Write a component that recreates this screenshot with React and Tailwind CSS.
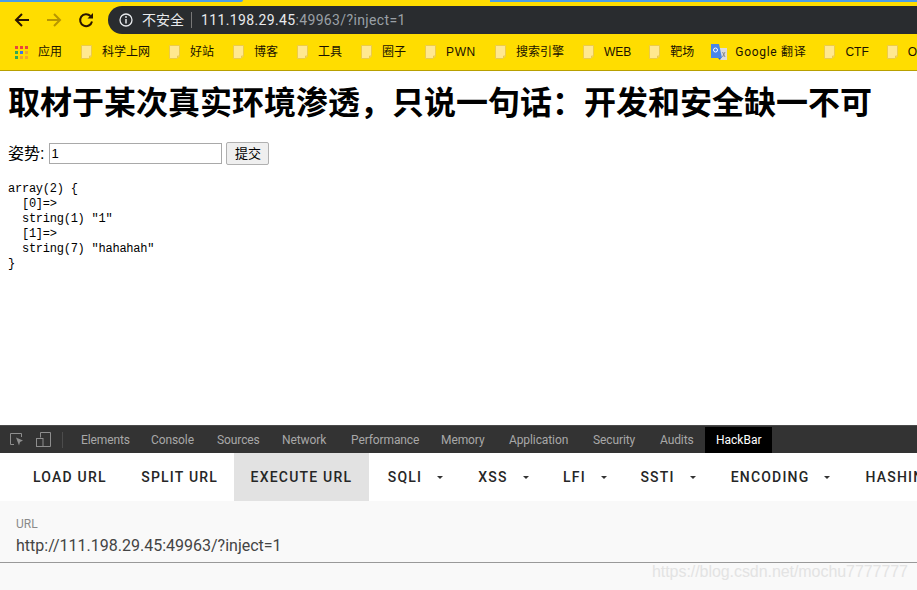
const CJK = 'font-["Liberation_Sans","Noto_Sans_CJK_SC",sans-serif]';

function Folder() {
  return (
    <svg width="11" height="14" viewBox="0 0 11 14" className="shrink-0 block">
      <path d="M0.5 0.5H10.5V11L8 13.5H0.5Z" fill="#ffe890" stroke="#eccb4a" />
      <path d="M8.5 13V11H10.5" fill="none" stroke="#eccb4a" />
    </svg>
  );
}

function Bookmark({ children, cls = 'mr-[19px]', textCls = '' }) {
  return (
    <div className={`flex items-center shrink-0 ${cls}`}>
      <Folder />
      <span className={`ml-[10px] text-[12px] text-[#1a1200] whitespace-nowrap ${textCls}`}>{children}</span>
    </div>
  );
}

function AppsIcon() {
  const c = ['#e8453c', '#e8453c', '#e8453c', '#34a853', '#3c78e8', '#f0a830', '#34a853', '#f0a830', '#f0a830'];
  return (
    <div className="grid grid-cols-3 gap-[2px] w-[13px] shrink-0">
      {c.map((x, i) => (
        <div key={i} className="w-[3px] h-[3px]" style={{ background: x }} />
      ))}
    </div>
  );
}

function TranslateIcon() {
  return (
    <svg width="16" height="16" viewBox="0 0 16 16" className="shrink-0 block">
      <path d="M9 4H16V16H9Z" fill="#dcdcdc" />
      <path d="M0 0H8L11 14H0Z" fill="#4a86e8" />
      <path d="M10 14L9 16L7 14Z" fill="#3367b8" />
      <circle cx="4.5" cy="6" r="2" fill="none" stroke="#fff" strokeWidth="1" />
      <path d="M11.5 8L14 13M14 8L11.5 13" stroke="#777" strokeWidth="0.8" />
    </svg>
  );
}

function DevTab({ children, cls }) {
  return <div className={`shrink-0 pl-[12px] text-[12px] tracking-[-0.1px] text-[#a8a8a8] whitespace-nowrap ${cls}`}>{children}</div>;
}

function HackButton({ children, active, arrow, cls }) {
  return (
    <div className={`h-[48px] flex items-center shrink-0 whitespace-nowrap text-[14px] font-medium tracking-[1.2px] text-[#262626] ${active ? 'bg-[#e2e2e2]' : ''} ${cls}`}>
      {children}
      {arrow && <span className="ml-[15px] w-0 h-0 border-l-[3px] border-r-[3px] border-t-[3px] border-l-transparent border-r-transparent border-t-[#333]" />}
    </div>
  );
}

export default function App() {
  return (
    <div className={`relative w-[917px] h-[590px] overflow-hidden bg-white flex flex-col ${CJK}`}>
      {/* browser chrome */}
      <div className="bg-[#ffdd00] h-[71px] shrink-0 border-b border-[#b8a000] flex flex-col">
        <div className="h-[2px] flex shrink-0">
          <div className="w-[243px] bg-[#4a9de8] rounded-br-[3px]" />
          <div className="w-[247px]" />
          <div className="flex-1 bg-[#4a9de8]" />
        </div>
        <div className="h-[28px] mt-[4px] flex items-center shrink-0">
          <div className="w-[108px] pl-[14px] flex items-center gap-[16px]">
            <svg width="16" height="16" viewBox="0 0 16 16" fill="none" stroke="#2a1400" strokeWidth="2" className="shrink-0">
              <path d="M15 8H2.5M8 2L2 8L8 14" />
            </svg>
            <svg width="16" height="16" viewBox="0 0 16 16" fill="none" stroke="#b89600" strokeWidth="2" className="shrink-0">
              <path d="M1 8H13.5M8 2L14 8L8 14" />
            </svg>
            <svg width="16" height="16" viewBox="0 0 16 16" fill="none" stroke="#2a1400" strokeWidth="2" className="shrink-0">
              <path d="M14 9.5A6 6 0 1 1 12.5 4" />
              <path d="M15 1V6.5H9.5Z" fill="#2a1400" stroke="none" />
            </svg>
          </div>
          <div className="flex-1 h-[28px] bg-[#292c2f] rounded-l-[14px] flex items-center pl-[11px]">
            <svg width="14" height="14" viewBox="0 0 14 14" fill="none" className="shrink-0">
              <circle cx="7" cy="7" r="6" stroke="#e8eaed" strokeWidth="1.3" />
              <path d="M7 6V10.5" stroke="#e8eaed" strokeWidth="1.5" />
              <circle cx="7" cy="4" r="0.9" fill="#e8eaed" />
            </svg>
            <span className="ml-[9px] text-[14px] text-[#e8eaed]">不安全</span>
            <span className="ml-[7px] w-px h-[16px] bg-[#777]" />
            <span className="ml-[9px] text-[14px] text-[#e8eaed] font-['Roboto',sans-serif] tracking-[0.36px]">
              111.198.29.45<span className="text-[#9aa0a6]">:49963/?inject=1</span>
            </span>
          </div>
        </div>
        <div className="flex-1 flex items-center pl-[15px] overflow-hidden">
          <AppsIcon />
          <span className="ml-[10px] mr-[19px] text-[12px] text-[#1a1200] shrink-0">应用</span>
          <Bookmark>科学上网</Bookmark>
          <Bookmark>好站</Bookmark>
          <Bookmark>博客</Bookmark>
          <Bookmark>工具</Bookmark>
          <Bookmark>圈子</Bookmark>
          <Bookmark textCls="tracking-[0.6px]">PWN</Bookmark>
          <Bookmark>搜索引擎</Bookmark>
          <Bookmark cls="mr-[18px]">WEB</Bookmark>
          <Bookmark cls="mr-[17px]">靶场</Bookmark>
          <div className="flex items-center mr-[18px] shrink-0">
            <TranslateIcon />
            <span className="ml-[8px] text-[12px] text-[#1a1200] whitespace-nowrap font-['Roboto','Noto_Sans_CJK_SC',sans-serif] tracking-[0.7px]">Google 翻译</span>
          </div>
          <Bookmark cls="mr-[18px]">CTF</Bookmark>
          <Bookmark>O</Bookmark>
        </div>
      </div>

      {/* page */}
      <div className="h-[354px] shrink-0 px-[8px] text-black overflow-hidden">
        <h1 className="mt-[14px] text-[32px] leading-[37px] font-bold whitespace-nowrap">取材于某次真实环境渗透，只说一句话：开发和安全缺一不可</h1>
        <div className="mt-[20px] flex items-center h-[23px] text-[16px]">
          <span>姿势:</span>
          <input
            readOnly
            value="1"
            className="ml-[5px] w-[173px] h-[21px] border border-[#a9a9a9] bg-white px-[1px] text-[13px] text-black outline-none"
          />
          <button className="ml-[4px] w-[43px] h-[23px] border border-[#b0b0b0] bg-[#efefef] rounded-[2px] text-[13px] text-black">提交</button>
        </div>
        <pre className="mt-[17px] text-[12px] leading-[15px] tracking-[-0.24px] font-['Liberation_Mono',monospace] text-black">{`array(2) {
  [0]=>
  string(1) "1"
  [1]=>
  string(7) "hahahah"
}`}</pre>
      </div>

      {/* devtools tabs */}
      <div className="h-[28px] shrink-0 bg-[#333333] border-t border-[#4a4a4a] flex items-center font-['Roboto',sans-serif]">
        <div className="w-[69px] pl-[9px] flex items-center shrink-0">
          <svg width="15" height="15" viewBox="0 0 15 15" fill="none" className="shrink-0">
            <path d="M5 12.5H1.5V1.5H12.5V5" stroke="#8e8e8e" />
            <path d="M7 5.5L14 8.5L11 10L10 13.5Z" fill="#8e8e8e" />
          </svg>
          <svg width="15" height="15" viewBox="0 0 15 15" fill="none" className="ml-[12px] shrink-0">
            <path d="M4.5 5.5V0.5H14.5V14.5H7" stroke="#8e8e8e" />
            <rect x="0.5" y="6.5" width="6.5" height="8" stroke="#8e8e8e" />
          </svg>
          <span className="w-px h-[16px] bg-[#4c4c4c] ml-[11px]" />
        </div>
        <DevTab cls="w-[70px]">Elements</DevTab>
        <DevTab cls="w-[66px]">Console</DevTab>
        <DevTab cls="w-[65px]">Sources</DevTab>
        <DevTab cls="w-[69px]">Network</DevTab>
        <DevTab cls="w-[90px]">Performance</DevTab>
        <DevTab cls="w-[68px]">Memory</DevTab>
        <DevTab cls="w-[84px]">Application</DevTab>
        <DevTab cls="w-[67px]">Security</DevTab>
        <DevTab cls="w-[57px]">Audits</DevTab>
        <div className="h-[26px] w-[67px] shrink-0 flex items-center pl-[11px] bg-black text-[12px] text-white">HackBar</div>
      </div>

      {/* hackbar toolbar */}
      <div className="h-[48px] shrink-0 bg-white flex items-center font-['Roboto',sans-serif] pl-[33px]">
        <HackButton cls="mr-[34.6px]">LOAD URL</HackButton>
        <HackButton cls="mr-[15.6px]">SPLIT URL</HackButton>
        <HackButton active cls="px-[17px] mr-[18.5px]">EXECUTE URL</HackButton>
        <HackButton arrow cls="mr-[35px]">SQLI</HackButton>
        <HackButton arrow cls="mr-[34.5px]">XSS</HackButton>
        <HackButton arrow cls="mr-[33.5px]">LFI</HackButton>
        <HackButton arrow cls="mr-[35px]">SSTI</HackButton>
        <HackButton arrow cls="mr-[35px]">ENCODING</HackButton>
        <HackButton>HASHING</HackButton>
      </div>

      {/* hackbar form */}
      <div className="flex-1 bg-[#f9f9f9] font-['Roboto',sans-serif] pt-[16px]">
        <div className="pl-[16px] text-[12px] leading-[14px] text-[#8a8a8a]">URL</div>
        <div className="pl-[16px] mt-[3px] h-[29px] text-[16px] leading-[24px] text-[#444] border-b border-[#999]">http://111.198.29.45:49963/?inject=1</div>
      </div>

      {/* watermark */}
      <div className="absolute left-[652px] top-[562px] text-[16px] leading-[20px] tracking-[-0.06px] text-[#e3e3e3] font-['Liberation_Sans',sans-serif] whitespace-nowrap">https://blog.csdn.net/mochu7777777</div>
    </div>
  );
}
